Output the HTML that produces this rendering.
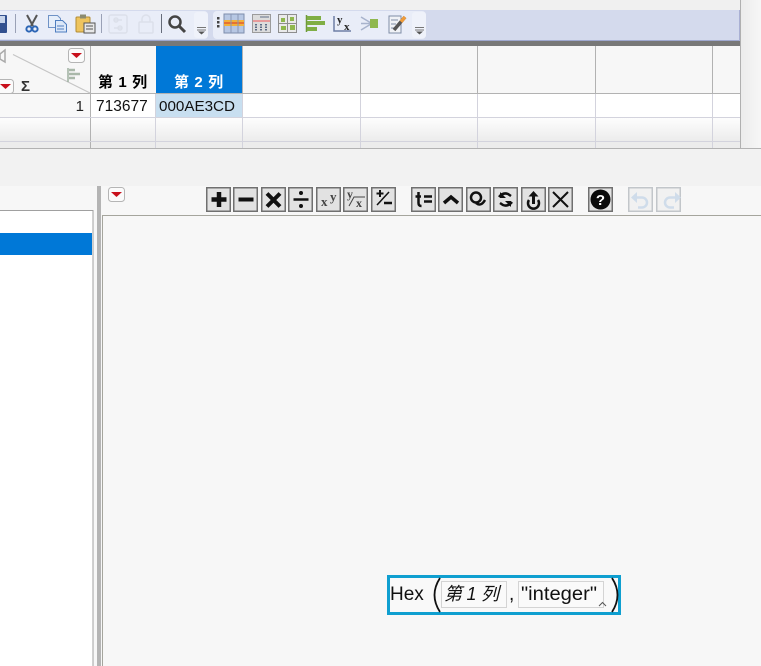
<!DOCTYPE html>
<html><head><meta charset="utf-8"><style>
html,body{margin:0;padding:0;background:#f7f7f7;overflow:hidden}
svg{display:block}
text{font-family:"Liberation Sans","Noto Sans CJK SC",sans-serif}
</style></head><body>
<svg width="761" height="666" viewBox="0 0 761 666" xmlns="http://www.w3.org/2000/svg">
<defs>
<linearGradient id="r" x1="0" y1="0" x2="0" y2="1"><stop offset="0" stop-color="#fdfdfd"/><stop offset="1" stop-color="#ececec"/></linearGradient>
<linearGradient id="s" x1="0" y1="0" x2="1" y2="0"><stop offset="0" stop-color="#ececec"/><stop offset="1" stop-color="#f6f6f6"/></linearGradient>
<g id="rb"><rect x=".5" y=".5" width="16" height="14" rx="3" fill="#fbfbfb" stroke="#b5b5b5"/><path d="M3 5h11l-5.500 5z" fill="#c8101c"/></g>
<g id="b"><rect x=".75" y=".75" width="23.500" height="23.500" fill="#e2e2e2" stroke="#707070" stroke-width="1.500"/></g>
<g id="bd"><rect x=".75" y=".75" width="23.500" height="23.500" fill="#f1f1f1" stroke="#c2c6ca" stroke-width="1.500"/></g>
</defs>
<rect width="761" height="666" fill="#f7f7f7"/>
<rect width="761" height="149" fill="#f0f0f0"/>
<rect x="741" width="20" height="149" fill="url(#s)"/>
<rect x="740" width="1" height="149" fill="#b0b0b0"/>
<!-- toolbar -->
<rect y="10" width="740" height="31" fill="#d4daed"/>
<rect y="40" width="740" height="1" fill="#9fa8cf"/>
<rect x="739" y="10" width="1" height="31" fill="#a9b0d4"/>
<rect x="-5" y="11" width="213" height="28" rx="4" fill="#e9edf8"/>
<rect x="194" y="12" width="14" height="26" rx="3" fill="#eff2fa"/>
<rect x="213" y="11" width="213" height="28" rx="4" fill="#e9edf8"/>
<rect x="412" y="12" width="14" height="26" rx="3" fill="#eff2fa"/>
<rect y="41" width="740" height="5" fill="#787878"/>
<!-- table -->
<rect y="46" width="740" height="47" fill="#f7f7f7"/>
<rect y="94" width="740" height="23" fill="#fff"/>
<rect y="94" width="90" height="23" fill="#f8f8f8"/>
<rect y="118" width="740" height="23" fill="url(#r)"/>
<rect y="142" width="740" height="6" fill="#ececec"/>
<rect x="156" y="46" width="86" height="47" fill="#0078d7"/>
<rect x="156" y="94" width="86" height="23" fill="#c8dff0"/>
<g fill="#b2b2b2">
<rect y="93" width="740" height="1"/>
<rect x="90" y="46" width="1" height="102"/>
<rect x="360" y="46" width="1" height="47"/><rect x="477" y="46" width="1" height="47"/><rect x="595" y="46" width="1" height="47"/><rect x="712" y="46" width="1" height="47"/><rect x="242" y="46" width="1" height="47"/>
<rect y="148" width="761" height="1"/>
</g>
<g fill="#d3d3dd">
<rect y="117" width="740" height="1"/><rect y="141" width="740" height="1"/>
<rect x="155" y="94" width="1" height="54"/><rect x="242" y="94" width="1" height="54"/><rect x="360" y="94" width="1" height="54"/><rect x="477" y="94" width="1" height="54"/><rect x="595" y="94" width="1" height="54"/><rect x="712" y="94" width="1" height="54"/>
</g>
<path d="M13 54.500L90 93" stroke="#c4c4c4" fill="none"/>
<path d="M5 50L0 54v5l5 3z" fill="none" stroke="#aaa" stroke-width="1.500"/>
<use href="#rb" x="68" y="48"/>
<use href="#rb" x="-3" y="79"/>
<path d="M68 68v14" stroke="#9fb0a0" stroke-width="1.500"/>
<path d="M69 70h6M69 74h11M69 78h6" stroke="#a9b8a9" stroke-width="2.500"/>
<text x="21" y="91" font-size="15" font-weight="bold" fill="#333">Σ</text>
<text x="98" y="87" font-size="15" font-weight="bold" fill="#000" word-spacing="1.200">第 1 列</text>
<text x="174" y="87" font-size="15" font-weight="bold" fill="#fff" word-spacing="1.200">第 2 列</text>
<text x="84" y="111" font-size="15" text-anchor="end" fill="#222">1</text>
<text x="96" y="111" font-size="15.500" fill="#111">713677</text>
<text x="159" y="111" font-size="15" fill="#111" textLength="76" lengthAdjust="spacingAndGlyphs">000AE3CD</text>
<!-- toolbar icons -->
<rect x="-6" y="15" width="13" height="18" rx="1" fill="#32508f"/><rect x="-1" y="16" width="6" height="7" fill="#c6d3ea"/>
<g fill="#9aa1b6"><rect x="15" y="14" width="1" height="19"/><rect x="101" y="14" width="1" height="19"/></g><rect x="161" y="14" width="1" height="19" fill="#666c7a"/>
<path d="M27 15l6 11M37 15l-6 11" stroke="#555" stroke-width="2" fill="none"/><circle cx="29" cy="29" r="2.600" fill="none" stroke="#2c65b5" stroke-width="2"/><circle cx="35" cy="29" r="2.600" fill="none" stroke="#2c65b5" stroke-width="2"/>
<path d="M48.500 15.500h9l3 3v9h-12z" fill="#e6eefa" stroke="#6f92c6"/><path d="M55.500 20.500h7l4 4v7.500h-11z" fill="#dbe7f8" stroke="#4f7ec0"/><path d="M57 26h7M57 29h7" stroke="#4f7ec0"/>
<rect x="76" y="17" width="14" height="15" rx="1" fill="#eec45e" stroke="#b18b33"/><rect x="80" y="14.500" width="6" height="4" fill="#8b8b70"/><rect x="84" y="23" width="11" height="10" fill="#e8e8e8" stroke="#555"/><path d="M86 26h7M86 29h7" stroke="#555"/>
<g fill="none" stroke="#dce0ea" stroke-width="1.500"><rect x="109" y="15" width="18" height="18" rx="2"/><path d="M114 20h8M114 28h8"/><circle cx="116" cy="20" r="2"/><circle cx="120" cy="28" r="2"/><rect x="139" y="22" width="14" height="11" rx="1"/><path d="M142 22v-3a4 4 0 0 1 8 0v3"/></g>
<circle cx="175" cy="22" r="5.500" fill="none" stroke="#444" stroke-width="2.500"/><path d="M179 26l6 6" stroke="#444" stroke-width="3"/>
<path d="M197 27.500h9M197 30h9" stroke="#777"/><path d="M198 31.500h7l-3.500 3z" fill="#555"/>
<path d="M415 27.500h9M415 30h9" stroke="#777"/><path d="M416 31.500h7l-3.500 3z" fill="#555"/>
<g fill="#444"><rect x="217" y="17" width="2.500" height="2.500"/><rect x="217" y="21" width="2.500" height="2.500"/><rect x="217" y="25" width="2.500" height="2.500"/></g>
<rect x="224" y="14" width="20" height="19" fill="#b7c7e3" stroke="#7d8dab"/><rect x="224" y="20" width="20" height="6" fill="#f2b13a"/><path d="M224 23h20" stroke="#d9322c"/><path d="M231 14v19M238 14v19" stroke="#8a97b5"/>
<rect x="252.500" y="14.500" width="18" height="18" fill="#dcdcdc" stroke="#9b9b9b"/><path d="M253 21h17" stroke="#e69a9a" stroke-width="2"/><path d="M260 17h9" stroke="#8a93a5" stroke-width="1.500"/><path d="M256 24v7M261 24v7M266 24v7" stroke="#5d6b85" stroke-width="2" stroke-dasharray="1.500 1"/>
<rect x="278.500" y="14.500" width="18" height="18" fill="#eaeaea" stroke="#8e8e8e"/><path d="M287.500 15v17M279 23.500h17" stroke="#8e8e8e"/><g fill="#8fb84e"><rect x="281" y="18" width="4" height="4"/><rect x="290" y="17" width="4" height="4"/><rect x="281" y="26" width="5" height="4"/><rect x="290" y="25" width="5" height="5"/></g>
<path d="M306.500 15v17" stroke="#6f9a39" stroke-width="1.500"/><g fill="#7fae45"><rect x="307" y="16" width="14" height="4"/><rect x="307" y="21" width="18" height="4"/><rect x="307" y="27" width="10" height="4"/></g>
<path d="M334 16v15h17" fill="none" stroke="#6f7fa6" stroke-width="1.500"/>
<text x="337" y="23" font-size="11" font-weight="bold" style="font-family:'Liberation Serif',serif" fill="#222">y</text><text x="344" y="30" font-size="11" font-weight="bold" style="font-family:'Liberation Serif',serif" fill="#222">x</text>
<path d="M361 17l10 6M361 30l10-6M361 23.500h10" stroke="#a8b3cc" stroke-width="1.500"/><rect x="370" y="19" width="8" height="9" fill="#8fb84e"/>
<rect x="389" y="16" width="12" height="17" fill="#f0f2f6" stroke="#7f8da6"/><path d="M391 20h7M391 24h5M391 28h4" stroke="#7f8da6"/><path d="M394 30l11-13" stroke="#555" stroke-width="3.500"/><path d="M401 21.700l4-4.700" stroke="#ef9b3a" stroke-width="3.500"/>
<!-- lower area -->
<rect y="149" width="761" height="37" fill="#f2f2f2"/>
<rect y="186" width="761" height="480" fill="#f7f7f7"/>
<rect x="97" y="186" width="4" height="480" fill="#b4b4b4"/>
<rect x="-2" y="210.500" width="95" height="460" fill="#fff" stroke="#a0a0a0"/>
<rect y="233" width="92" height="22" fill="#0078d7"/>
<rect x="102.500" y="215.500" width="670" height="460" fill="#f7f7f7" stroke="#a5a59d"/>
<use href="#rb" x="108" y="187"/>
<!-- formula buttons -->
<use href="#b" x="206" y="187"/><use href="#b" x="233" y="187"/><use href="#b" x="261" y="187"/><use href="#b" x="288" y="187"/><use href="#b" x="316" y="187"/><use href="#b" x="343" y="187"/><use href="#b" x="371" y="187"/>
<use href="#b" x="411" y="187"/><use href="#b" x="438" y="187"/><use href="#b" x="466" y="187"/><use href="#b" x="493" y="187"/><use href="#b" x="521" y="187"/><use href="#b" x="548" y="187"/><use href="#b" x="588" y="187"/>
<use href="#bd" x="628" y="187"/><use href="#bd" x="656" y="187"/>
<g stroke="#111" fill="none">
<path d="M211.500 199.500h15M219 192v15" stroke-width="4.500"/>
<path d="M238.500 199.500h15" stroke-width="4"/>
<path d="M267 193.500l13 13M280 193.500l-13 13" stroke-width="4"/>
<path d="M293.500 199.500h15" stroke-width="2.500"/>
<path d="M377 205l12-13" stroke-width="1.500"/>
<path d="M376.500 193.500h7M380 190v7" stroke-width="2"/>
<path d="M384 203h8" stroke-width="2.500"/>
<path d="M418.500 192v11q0 3 3 3M415.500 196.500h5.500" stroke-width="2.500"/>
<path d="M424 196.500h8M424 201.500h8" stroke-width="2.500"/>
<path d="M444 203l7-6 7 6" stroke-width="3.500"/>
<circle cx="476" cy="197.500" r="5" stroke-width="2.500"/>
<path d="M476 203q5 4 9-3" stroke-width="2.500"/>
<path d="M499 197q4-5 9-3l3 2M512 202q-4 5-9 3l-3-2" stroke-width="2.500"/>
<path d="M529 200a5.500 5.500 0 1 0 9 0" stroke-width="2.500"/>
<path d="M533.500 194v10" stroke-width="3"/>
<path d="M553 192l15 15M568 192l-15 15" stroke-width="2"/>
</g>
<circle cx="301" cy="193" r="2" fill="#111"/><circle cx="301" cy="206" r="2" fill="#111"/>
<path d="M533.500 191l-5 5.500h10z" fill="#111"/>
<path d="M500 192v6h6zM511 207v-6h-6z" fill="#111"/>
<circle cx="600.500" cy="199.500" r="10" fill="#0a0a0a"/>
<text x="600.500" y="205" font-size="15" font-weight="bold" text-anchor="middle" fill="#fff">?</text>
<text x="321" y="206" font-size="13" font-weight="bold" style="font-family:'Liberation Serif',serif" fill="#444">x</text>
<text x="330" y="201" font-size="13" font-weight="bold" style="font-family:'Liberation Serif',serif" fill="#444">y</text>
<text x="347" y="198" font-size="12" font-weight="bold" style="font-family:'Liberation Serif',serif" fill="#444">y</text>
<text x="356" y="207" font-size="12" font-weight="bold" style="font-family:'Liberation Serif',serif" fill="#444">x</text>
<path d="M349 206l5-9h11" fill="none" stroke="#444"/>
<g fill="none" stroke="#cfdcea" stroke-width="2.500">
<path d="M635 197.500h7a5 5 0 0 1 0 10h-4"/><path d="M677 197.500h-7a5 5 0 0 0 0 10h4"/>
</g>
<path d="M637 192l-6 5.500 6 5.500zM675 192l6 5.500-6 5.500z" fill="#cfdcea"/>
<!-- formula -->
<rect x="388.500" y="576.500" width="231" height="37" fill="#f9f9f9" stroke="#0f9fd0" stroke-width="3"/>
<rect x="441.500" y="581.500" width="65" height="26" fill="#fafafa" stroke="#d4d4d4"/>
<rect x="518.500" y="581.500" width="85" height="26" fill="#fafafa" stroke="#d4d4d4"/>
<text x="390" y="600" font-size="19" fill="#111">Hex</text>
<text x="444" y="600" font-size="18" font-style="italic" fill="#111" textLength="55" lengthAdjust="spacing">第 1 列</text>
<text x="509" y="600" font-size="19" fill="#111">,</text>
<text x="521" y="600" font-size="19" fill="#111" textLength="76" lengthAdjust="spacingAndGlyphs">"integer"</text>
<path d="M440 578q-11 17 0 34M612 578q11 17 0 34" fill="none" stroke="#111" stroke-width="1.800"/>
<path d="M599 606l3.500-3.500 3.500 3.500" fill="none" stroke="#555"/>
</svg>
</body></html>
